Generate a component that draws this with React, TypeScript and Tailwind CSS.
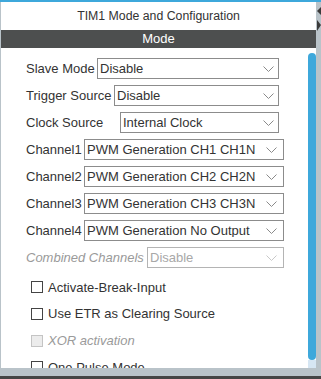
import { ReactNode } from 'react';

const font = { fontFamily: '"Liberation Sans", Arial, sans-serif' };

function Chevron({ disabled }: { disabled?: boolean }) {
  return (
    <svg width="11" height="6" viewBox="0 0 11 6" className="shrink-0">
      <path d="M0.5 0.5 L5.5 5.5 L10.5 0.5" fill="none" stroke={disabled ? '#c8c8c8' : '#8a8a8a'} strokeWidth="1" />
    </svg>
  );
}

function Select({ value, width, inset, disabled }: { value: string; width: string; inset: string; disabled?: boolean }) {
  return (
    <div className={`h-[21px] ${width} ${inset} ml-auto flex items-center border ${disabled ? 'border-[#b4b4b4] text-[#a8a8a8]' : 'border-[#8c8c8c] text-[#333]'} pl-[2px] bg-white`}>
      <span className="flex-1 truncate leading-none">{value}</span>
      <Chevron disabled={disabled} />
    </div>
  );
}

function Row({ label, children, width, muted }: { label: string; children: ReactNode; width: string; muted?: boolean }) {
  return (
    <div className={`flex items-center h-[21px] ${width}`}>
      <span className={`whitespace-nowrap ${muted ? 'italic text-[#9a9a9a]' : 'text-[#333]'}`}>{label}</span>
      {children}
    </div>
  );
}

function Check({ label, disabled }: { label: string; disabled?: boolean }) {
  return (
    <div className="flex items-center h-[26.7px] pl-[5px]">
      <div className={`w-[12px] h-[12px] border ${disabled ? 'border-[#c4c4c4] bg-[#ececec]' : 'border-[#444] bg-white'}`} />
      <span className={`ml-[5px] whitespace-nowrap ${disabled ? 'italic text-[#9a9a9a]' : 'text-[#333]'}`}>{label}</span>
    </div>
  );
}

export default function App() {
  return (
    <div className="w-[321px] h-[379px] flex flex-col bg-[#b9c3c9] overflow-hidden text-[13px]" style={font}>
      <div className="h-[2px] bg-[#3ea8db] shrink-0" />
      <div className="flex flex-1 min-h-0">
        <div className="w-px bg-[#b9c3c9]" />
        <div className="w-[315px] bg-white flex flex-col min-h-0">
          <div className="h-[28px] flex items-center justify-center text-[#333] text-[12.3px]">TIM1 Mode and Configuration</div>
          <div className="h-[18px] bg-[#4d4f4f] text-white flex items-center justify-center">Mode</div>
          <div className="flex flex-1 min-h-0">
            <div className="flex-1 overflow-hidden pl-[25px] pt-[10px]">
              <div className="flex flex-col gap-[6px]">
                <Row label="Slave Mode" width="w-[253px]">
                  <Select value="Disable" width="w-[182px]" inset="pr-[4px]" />
                </Row>
                <Row label="Trigger Source" width="w-[253px]">
                  <Select value="Disable" width="w-[165px]" inset="pr-[4px]" />
                </Row>
                <Row label="Clock Source" width="w-[253px]">
                  <Select value="Internal Clock" width="w-[159px]" inset="pr-[4px]" />
                </Row>
                <Row label="Channel1" width="w-[258px]">
                  <Select value="PWM Generation CH1 CH1N" width="w-[200px]" inset="pr-[6px]" />
                </Row>
                <Row label="Channel2" width="w-[258px]">
                  <Select value="PWM Generation CH2 CH2N" width="w-[200px]" inset="pr-[6px]" />
                </Row>
                <Row label="Channel3" width="w-[258px]">
                  <Select value="PWM Generation CH3 CH3N" width="w-[200px]" inset="pr-[6px]" />
                </Row>
                <Row label="Channel4" width="w-[258px]">
                  <Select value="PWM Generation No Output" width="w-[200px]" inset="pr-[6px]" />
                </Row>
                <Row label="Combined Channels" width="w-[258px]" muted>
                  <Select value="Disable" width="w-[137px]" inset="pr-[6px]" disabled />
                </Row>
              </div>
              <div className="mt-[6px] flex flex-col">
                <Check label="Activate-Break-Input" />
                <Check label="Use ETR as Clearing Source" />
                <Check label="XOR activation" disabled />
                <Check label="One Pulse Mode" />
              </div>
            </div>
            <div className="w-[8px] flex flex-col pt-[5px]">
              <div className="flex-1 bg-[#3ea8db] rounded-full" />
              <div className="h-[8px] bg-[#d6e6f3]" />
            </div>
          </div>
        </div>
        <div className="w-[5px] bg-[#b9c3c9] relative">
          <svg width="5" height="34" viewBox="0 0 5 34" className="absolute top-0 left-0">
            <path d="M5 5 L1 9 L5 13 Z" fill="#3a3a3a" />
            <path d="M1 18 L5 23 L1 29 Z" fill="#3a3a3a" />
          </svg>
        </div>
      </div>
      <div className="h-[8px] bg-[#b9c3c9] shrink-0" />
      <div className="h-[3px] bg-[#454545] shrink-0" />
    </div>
  );
}
